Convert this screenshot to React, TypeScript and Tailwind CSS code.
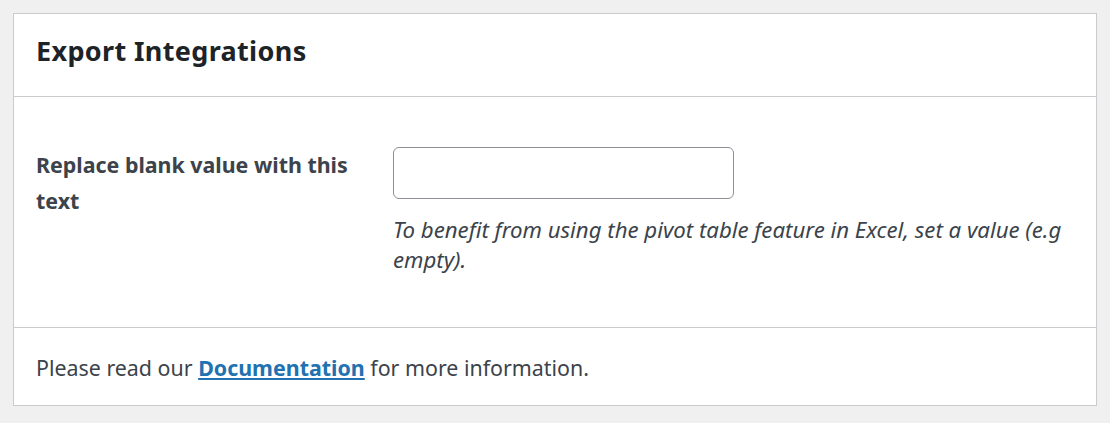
import React from "react";

export default function App() {
  return (
    <div
      className="w-[1110px] h-[423px] bg-[#f0f0f1] pt-[13px] pl-[13px]"
      style={{ fontFamily: '"Noto Sans", "Open Sans", sans-serif' }}
    >
      <div className="w-[1084px] bg-white border border-[#c9cbcf]">
        <div className="border-b border-[#c9cbcf] pl-[22px] pt-[21px] pb-[29px]">
          <h2 className="text-[27px] leading-[32px] font-bold tracking-[0.35px] text-[#1d2327]">
            Export Integrations
          </h2>
        </div>
        <div className="border-b border-[#c9cbcf] pl-[22px] pr-[22px] pt-[50px] pb-[52px] flex">
          <div className="w-[357px] shrink-0 text-[21.4px] leading-[36px] font-bold text-[#3c434a] pr-[8px]">
            Replace blank value with this text
          </div>
          <div className="flex-1 flex flex-col">
            <input
              type="text"
              className="w-[341px] h-[52px] border-[1.5px] border-[#8c8f94] rounded-[6px] bg-white outline-none"
            />
            <p className="mt-[16px] text-[22.2px] leading-[30px] italic text-[#3c434a] max-w-[685px]">
              To benefit from using the pivot table feature in Excel, set a value (e.g empty).
            </p>
          </div>
        </div>
        <div className="pl-[22px] pt-[25px] pb-[22px] text-[21.4px] leading-[30px] text-[#3c434a]">
          Please read our{" "}
          <a href="#" className="font-bold text-[#2271b1] underline">
            Documentation
          </a>{" "}
          for more information.
        </div>
      </div>
    </div>
  );
}
